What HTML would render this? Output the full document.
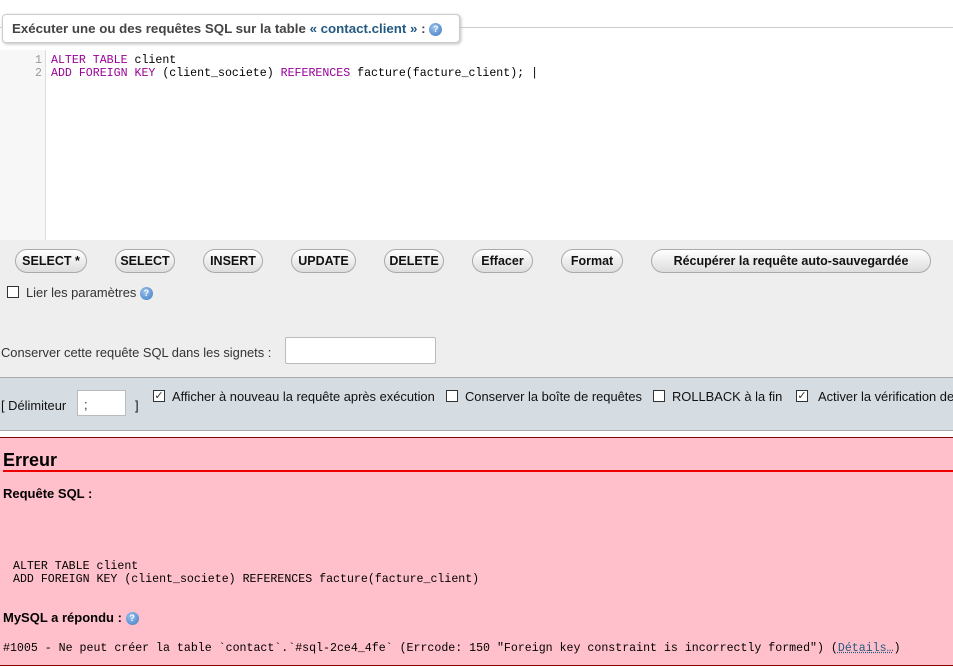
<!DOCTYPE html>
<html><head><meta charset="utf-8"><style>
*{box-sizing:border-box}
body{margin:0;width:953px;height:667px;overflow:hidden;background:#fff;font-family:"Liberation Sans",Arial,sans-serif;font-size:12.9px;color:#333;position:relative}
.abs{position:absolute;white-space:nowrap}
.mono{font-family:"Liberation Mono","Courier New",monospace;font-size:11.6px}
.btn{position:absolute;top:249px;height:24px;border:1px solid #aaa;border-radius:12px;background:linear-gradient(#fff,#ddd);font-weight:bold;font-size:12.5px;color:#111;text-align:center;line-height:22px;white-space:nowrap}
.help{display:inline-block;width:13px;height:13px;border-radius:50%;background:radial-gradient(circle at 40% 35%,#9cc4ee,#3a78c2);color:#fff;font-size:9px;font-weight:bold;text-align:center;line-height:13px;vertical-align:middle}
.cb{position:absolute;width:12px;height:12px;border:1px solid #333;background:#fff;font-size:11px;line-height:10px;text-align:center}
.kw{color:#909}
</style></head><body>
<div class="abs" style="left:0;top:0;width:953px;height:28px;background:#fff;border-bottom:1px solid #ccc"></div>
<div class="abs" style="left:0;top:28px;width:953px;height:212px;background:#fff"></div>
<div class="abs" style="left:0;top:50px;width:46px;height:190px;background:#f7f7f7;border-right:1px solid #ddd"></div>
<div class="abs" style="left:2px;top:14px;width:458px;height:29px;background:#fff;border:1px solid #ccc;border-radius:4px;box-shadow:1px 1px 3px #bbb;font-size:13.3px;font-weight:bold;color:#444;line-height:27px;padding-left:9px">Exécuter une ou des requêtes SQL sur la table <span style="color:#235a81">« contact.client »</span> : <span class="help">?</span></div>
<div class="abs mono" style="left:30px;top:54px;line-height:13px;color:#999;text-align:right;width:12px">1<br>2</div>
<div class="abs mono" style="left:51px;top:54px;line-height:13px;color:#000;white-space:pre"><span class="kw">ALTER TABLE</span> client
<span class="kw">ADD FOREIGN KEY</span> (client_societe) <span class="kw">REFERENCES</span> facture(facture_client); |</div>
<div class="abs" style="left:0;top:240px;width:953px;height:138px;background:#eee"></div>
<div class="btn" style="left:15px;width:72px">SELECT *</div>
<div class="btn" style="left:115px;width:60px">SELECT</div>
<div class="btn" style="left:203px;width:60px">INSERT</div>
<div class="btn" style="left:291px;width:65px">UPDATE</div>
<div class="btn" style="left:384px;width:60px">DELETE</div>
<div class="btn" style="left:472px;width:61px">Effacer</div>
<div class="btn" style="left:561px;width:62px">Format</div>
<div class="btn" style="left:651px;width:280px">Récupérer la requête auto-sauvegardée</div>
<div class="cb" style="left:7px;top:286px"></div>
<div class="abs" style="left:26px;top:285px">Lier les paramètres <span class="help">?</span></div>
<div class="abs" style="left:1px;top:345px">Conserver cette requête SQL dans les signets :</div>
<div class="abs" style="left:285px;top:337px;width:151px;height:27px;background:#fff;border:1px solid #bbb;border-radius:2px"></div>
<div class="abs" style="left:0;top:377px;width:953px;height:54px;background:#d5dce2;border-top:1px solid #aaa;border-bottom:1px solid #aaa"></div>
<div class="abs" style="left:1px;top:398px;color:#111">[ Délimiteur</div>
<div class="abs" style="left:77px;top:390px;width:49px;height:26px;background:#fff;border:1px solid #bbb;padding:6px 0 0 6px">;</div>
<div class="abs" style="left:135px;top:398px;color:#111">]</div>
<div class="cb" style="left:153px;top:390px">✓</div>
<div class="abs" style="left:172px;top:389px;color:#111">Afficher à nouveau la requête après exécution</div>
<div class="cb" style="left:446px;top:390px"></div>
<div class="abs" style="left:465px;top:389px;color:#111">Conserver la boîte de requêtes</div>
<div class="cb" style="left:653px;top:390px"></div>
<div class="abs" style="left:672px;top:389px;color:#111">ROLLBACK à la fin</div>
<div class="cb" style="left:796px;top:390px">✓</div>
<div class="abs" style="left:818px;top:389px;width:135px;overflow:hidden;color:#111">Activer la vérification des clés</div>
<div class="abs" style="left:0;top:437px;width:953px;height:229px;background:#ffc0cb;border-top:1px solid #800;border-bottom:1px solid #800"></div>
<div class="abs" style="left:3px;top:450px;font-size:18px;font-weight:bold;color:#000">Erreur</div>
<div class="abs" style="left:3px;top:470px;width:950px;height:2px;background:#e00"></div>
<div class="abs" style="left:3px;top:486px;font-size:13px;font-weight:bold;color:#000">Requête SQL :</div>
<div class="abs mono" style="left:13px;top:560px;line-height:13px;color:#000;white-space:pre">ALTER TABLE client
ADD FOREIGN KEY (client_societe) REFERENCES facture(facture_client)</div>
<div class="abs" style="left:3px;top:610px;font-size:13px;font-weight:bold;color:#000">MySQL a répondu : <span class="help">?</span></div>
<div class="abs mono" style="left:3px;top:642px;color:#000;white-space:pre">#1005 - Ne peut créer la table `contact`.`#sql-2ce4_4fe` (Errcode: 150 "Foreign key constraint is incorrectly formed") (<span style="color:#235a81;text-decoration:underline dotted">Détails…</span>)</div>
</body></html>
